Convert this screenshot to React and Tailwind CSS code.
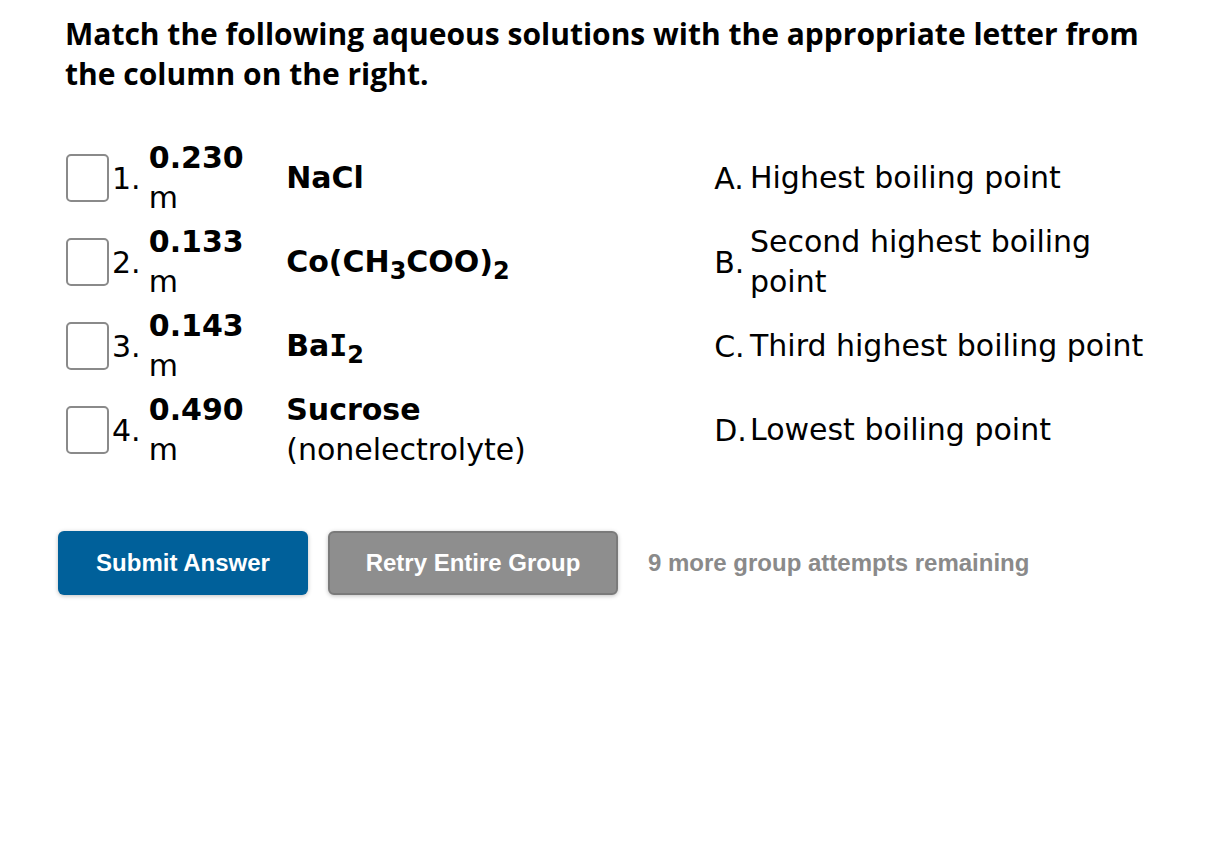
import React from 'react';

const Sub = ({ children }) => (
  <sub className="text-[24px] relative top-[7px]">{children}</sub>
);

const rows = [
  { n: 1, value: '0.230', formula: <>NaCl</>, letter: 'A', text: 'Highest boiling point' },
  {
    n: 2,
    value: '0.133',
    formula: (
      <>
        Co(CH<Sub>3</Sub>COO)<Sub>2</Sub>
      </>
    ),
    letter: 'B',
    text: 'Second highest boiling point',
  },
  {
    n: 3,
    value: '0.143',
    formula: (
      <>
        Ba<span style={{ fontFamily: '"DejaVu Sans Mono", monospace' }}>I</span>
        <Sub>2</Sub>
      </>
    ),
    letter: 'C',
    text: 'Third highest boiling point',
  },
  {
    n: 4,
    value: '0.490',
    formula: (
      <>
        Sucrose
        <br />
        <span className="font-normal">(nonelectrolyte)</span>
      </>
    ),
    letter: 'D',
    text: 'Lowest boiling point',
  },
];

const Row = ({ row }) => (
  <div className="flex items-center h-[84px]">
    <div className="w-[43px] h-[48px] border-2 border-[#8a8a8a] rounded-[5px] bg-white ml-[1px] shrink-0" />
    <div className="w-[40px] pl-[3px]">{row.n}.</div>
    <div className="w-[138px] leading-[40px]">
      <div className="font-bold">{row.value}</div>
      <div>m</div>
    </div>
    <div className="w-[430px] font-bold leading-[40px]">{row.formula}</div>
    <div className="w-[36px]">{row.letter}.</div>
    <div className="w-[410px] leading-[40px]">{row.text}</div>
  </div>
);

export default function App() {
  return (
    <div className="min-h-screen bg-white text-black px-[65px] pt-[14px]">
      <h1
        className="text-[30px] font-bold leading-[40px] max-w-[1100px]"
        style={{ fontFamily: '"Open Sans", sans-serif' }}
      >
        Match the following aqueous solutions with the appropriate letter from the column on the right.
      </h1>

      <div
        className="mt-[42px] text-[30px] text-black"
        style={{ fontFamily: '"DejaVu Sans", Verdana, sans-serif' }}
      >
        {rows.map((r) => (
          <Row key={r.n} row={r} />
        ))}
      </div>

      <div
        className="mt-[59px] -ml-[7px] flex items-center gap-[20px]"
        style={{ fontFamily: '"Liberation Sans", Arial, sans-serif' }}
      >
        <button className="w-[250px] h-[64px] rounded-[6px] bg-[#00609a] text-white font-bold text-[24px] shadow-[0_1px_4px_rgba(0,0,0,0.25)]">
          Submit Answer
        </button>
        <button className="w-[290px] h-[64px] rounded-[6px] bg-[#8e8e8e] border-2 border-[#7a7a7a] text-white font-bold text-[24px] shadow-[0_1px_4px_rgba(0,0,0,0.25)]">
          Retry Entire Group
        </button>
        <span className="ml-[10px] text-[#8a8a8a] font-bold text-[24px]">
          9 more group attempts remaining
        </span>
      </div>
    </div>
  );
}
